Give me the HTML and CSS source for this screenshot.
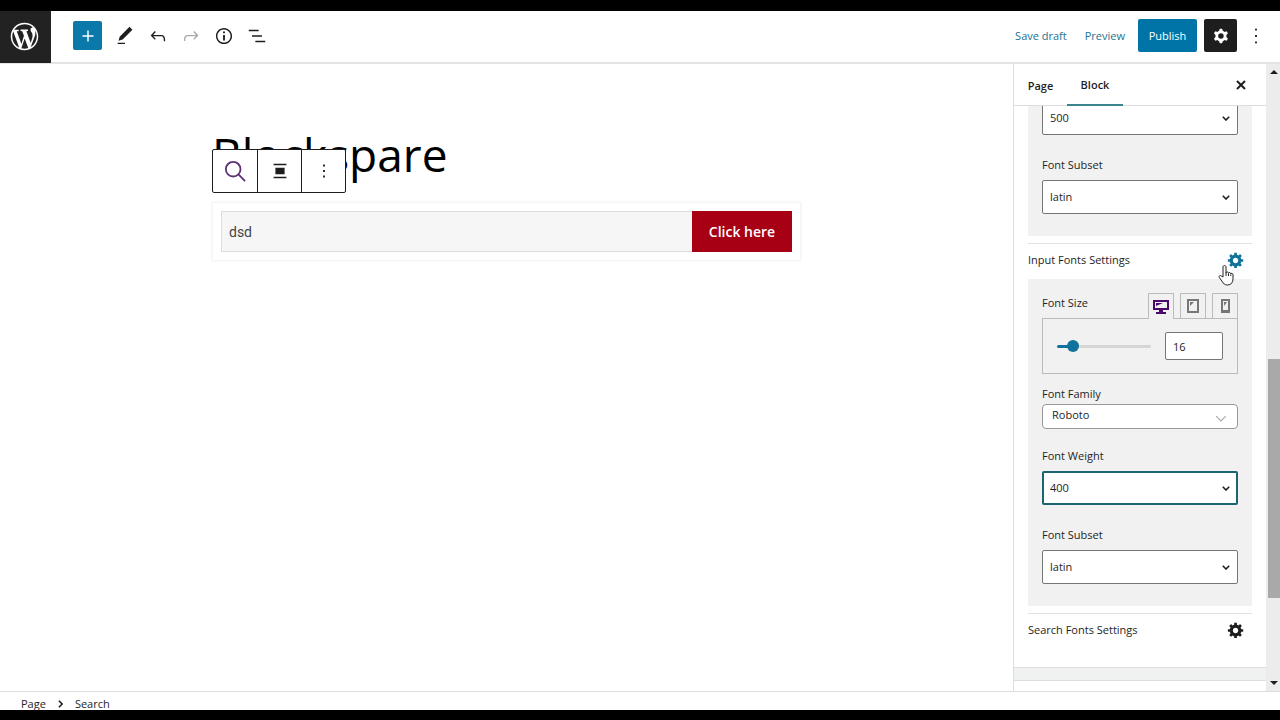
FILE: index.html
```
<!DOCTYPE html>
<html lang="en">
<head>
    <meta charset="UTF-8">
    <meta name="viewport" content="width=device-width, initial-scale=1.0">
    <title>Edit Page</title>
    <link rel="stylesheet" href="styles.css">
</head>
<body>

<header class="topbar">
    <a href="#" class="wp-logo" aria-label="View Pages">
        <svg viewBox="-2 -2 24 24"><path d="M20 10c0-5.51-4.49-10-10-10C4.48 0 0 4.49 0 10c0 5.52 4.48 10 10 10 5.51 0 10-4.48 10-10zM7.78 15.37L4.37 6.22c.55-.02 1.17-.08 1.17-.08.5-.06.44-1.13-.06-1.11 0 0-1.45.11-2.37.11-.18 0-.37 0-.58-.01C4.12 2.69 6.87 1.11 10 1.11c2.33 0 4.45.87 6.05 2.34-.68-.11-1.65.39-1.65 1.58 0 .74.45 1.36.9 2.1.35.61.55 1.36.55 2.46 0 1.49-1.4 5-1.4 5l-3.03-8.37c.54-.02.82-.17.82-.17.5-.05.44-1.25-.06-1.22 0 0-1.44.12-2.38.12-.87 0-2.33-.12-2.33-.12-.5-.03-.56 1.2-.06 1.22l.92.08 1.26 3.41zM17.41 10c.24-.64.74-1.87.43-4.25.7 1.29 1.05 2.71 1.05 4.25 0 3.29-1.73 6.24-4.4 7.78.97-2.59 1.94-5.2 2.92-7.78zM6.1 18.09C3.12 16.65 1.11 13.53 1.11 10c0-1.3.23-2.48.72-3.59C3.25 10.3 4.67 14.2 6.1 18.09zm4.03-6.63l2.58 6.98c-.86.29-1.76.45-2.71.45-.79 0-1.57-.11-2.29-.33.81-2.38 1.62-4.74 2.42-7.1z"/></svg>
    </a>
    <div class="tools">
        <button class="add-btn" aria-label="Add block"><svg viewBox="0 0 24 24"><path d="M18 11.2h-5.2V6h-1.6v5.2H6v1.6h5.2V18h1.6v-5.2H18z"/></svg></button>
        <button class="tool-btn" aria-label="Tools"><svg viewBox="0 0 24 24"><path d="M20.1 5.1L16.9 2 6.2 12.7l-1.3 4.4 4.5-1.3L20.1 5.1zM4 20.8h8v-1.5H4v1.5z"/></svg></button>
        <button class="tool-btn" aria-label="Undo"><svg viewBox="0 0 24 24"><path d="M18.3 11.7c-.6-.6-1.4-.9-2.3-.9H6.7l2.9-3.3-1.1-1-4.5 5L8.5 16l1-1-2.7-2.7H16c.5 0 .9.2 1.3.5 1 1 1 3.4 1 4.5v.3h1.5v-.2c0-1.5 0-4.3-1.5-5.7z"/></svg></button>
        <button class="tool-btn" aria-label="Redo" disabled><svg viewBox="0 0 24 24"><path d="M15.6 6.5l-1.1 1 2.9 3.3H8c-.9 0-1.7.3-2.3.9-1.4 1.5-1.4 4.2-1.4 5.6v.2h1.5v-.3c0-1.1 0-3.5 1-4.5.3-.3.7-.5 1.3-.5h9.2L14.5 15l1.1 1.1 4.6-4.6-4.6-5z"/></svg></button>
        <button class="tool-btn" aria-label="Details"><svg viewBox="0 0 24 24"><path d="M12 3.2c-4.8 0-8.8 3.9-8.8 8.8 0 4.8 3.9 8.8 8.8 8.8 4.8 0 8.8-3.9 8.8-8.8 0-4.8-4-8.8-8.8-8.8zm0 16c-4 0-7.2-3.3-7.2-7.2C4.8 8 8 4.8 12 4.8s7.2 3.3 7.2 7.2c0 4-3.2 7.2-7.2 7.2zM11 17h2v-6h-2v6zm0-8h2V7h-2v2z"/></svg></button>
        <button class="tool-btn" aria-label="List view"><svg viewBox="0 0 24 24"><path d="M13.8 5.2H3v1.5h10.8V5.2zm-3.6 12v1.5H21v-1.5H10.2zm7.2-6H6.6v1.5h10.8v-1.5z"/></svg></button>
    </div>
    <div class="actions">
        <button class="link-btn">Save draft</button>
        <button class="link-btn">Preview</button>
        <button class="publish-btn">Publish</button>
        <button class="settings-btn" aria-label="Settings"><svg viewBox="0 0 24 24"><path fill-rule="evenodd" d="M10.289 4.836A1 1 0 0111.275 4h1.306a1 1 0 01.987.836l.244 1.466c.787.26 1.503.679 2.108 1.218l1.393-.522a1 1 0 011.216.437l.653 1.13a1 1 0 01-.23 1.273l-1.148.944a6.025 6.025 0 010 2.435l1.149.946a1 1 0 01.23 1.272l-.653 1.13a1 1 0 01-1.216.437l-1.394-.522c-.605.54-1.32.958-2.108 1.218l-.244 1.466a1 1 0 01-.987.836h-1.306a1 1 0 01-.986-.836l-.244-1.466a5.995 5.995 0 01-2.108-1.218l-1.394.522a1 1 0 01-1.217-.436l-.653-1.131a1 1 0 01.23-1.272l1.149-.946a6.026 6.026 0 010-2.435l-1.148-.944a1 1 0 01-.23-1.272l.653-1.131a1 1 0 011.217-.437l1.393.522a5.994 5.994 0 012.108-1.218l.244-1.466zM14.929 12a3 3 0 11-6 0 3 3 0 016 0z"/></svg></button>
        <button class="more-btn" aria-label="Options"><svg viewBox="0 0 24 24"><path d="M11 4h2v2h-2zM11 11h2v2h-2zM11 18h2v2h-2z"/></svg></button>
    </div>
</header>

<div class="editor">
    <main class="canvas">
        <div class="content">
            <h1>Blockspare</h1>
            <div class="search-block">
                <div class="block-toolbar">
                    <button aria-label="Search block"><svg class="icon-search" viewBox="0 0 24 24"><circle cx="10" cy="10" r="8"/><path d="M16 16l7 7"/></svg></button>
                    <button aria-label="Align"><svg class="icon-align" viewBox="0 0 24 24"><path d="M5 4h14v1.6H5zM7 8.5h10v7H7zM5 18.4h14V20H5z"/></svg></button>
                    <button aria-label="More"><svg class="icon-align" viewBox="0 0 24 24"><path d="M11 5h2v2h-2zM11 11h2v2h-2zM11 17h2v2h-2z"/></svg></button>
                </div>
                <form class="search-form">
                    <input type="text" value="dsd" aria-label="Search">
                    <button type="button">Click here</button>
                </form>
            </div>
        </div>
    </main>

    <aside class="sidebar">
        <div class="tabs">
            <button class="tab">Page</button>
            <button class="tab active">Block</button>
            <button class="close-btn" aria-label="Close settings"><svg viewBox="0 0 12 12"><path d="M2 2l8 8M10 2l-8 8"/></svg></button>
        </div>

        <div class="settings">
            <section class="panel">
                <div class="group group-cut">
                    <div class="select">
                        <select aria-label="Font Weight"><option>500</option></select>
                        <svg viewBox="0 0 10 6"><path d="M1 1l4 4 4-4"/></svg>
                    </div>
                    <label for="subset1">Font Subset</label>
                    <div class="select">
                        <select id="subset1"><option>latin</option></select>
                        <svg viewBox="0 0 10 6"><path d="M1 1l4 4 4-4"/></svg>
                    </div>
                </div>

                <div class="setting-row">
                    <span>Input Fonts Settings</span>
                    <button class="gear open" aria-label="Input Fonts Settings"><svg viewBox="0 0 20 20"><path d="M18 12h-2.18c-.17.7-.44 1.35-.81 1.93l1.54 1.54-2.1 2.1-1.54-1.54c-.58.36-1.23.63-1.91.79V19H8v-2.18c-.68-.16-1.33-.43-1.91-.79l-1.54 1.54-2.12-2.12 1.54-1.54c-.36-.58-.63-1.23-.79-1.91H1V9.03h2.17c.16-.7.44-1.35.8-1.94L2.43 5.55l2.1-2.1 1.54 1.54c.58-.37 1.24-.64 1.93-.81V2h3v2.18c.68.16 1.33.43 1.91.79l1.54-1.54 2.12 2.12-1.54 1.54c.36.59.64 1.24.8 1.94H18V12zm-8.5 1.5c1.66 0 3-1.34 3-3s-1.34-3-3-3-3 1.34-3 3 1.34 3 3 3z"/></svg></button>
                    <svg class="pointer" viewBox="0 0 16 22"><path d="M5 13V3c0-2 3-2 3 0v6c0-1.500 2.500-1.500 2.500.5 0-1.500 2.300-1.300 2.300.6 0-1.300 2.200-1.100 2.200.8V15c0 3.500-2 6-5.500 6-3 0-4-1.500-5.200-3.400L1.300 13.500c-.9-1.600 1-2.500 2-1.500z"/><path d="M8 9v3M10.500 10v2M12.800 10.500V12"/></svg>
                </div>

                <div class="group group-open">
                    <div class="size-head">
                        <label for="size">Font Size</label>
                        <div class="devices">
                            <button class="active" aria-label="Desktop"><svg viewBox="0 0 16 16"><path fill-rule="evenodd" d="M0 1h16v10h-6v2h3v2H3v-2h3v-2H0zM2 3v6h12V3z"/><path d="M3 4h7L3 7z"/></svg></button>
                            <button aria-label="Tablet"><svg viewBox="0 0 16 16"><path fill-rule="evenodd" d="M2 1h12v14H2zM4 3v10h8V3z"/><path d="M5 4h4L5 8z"/></svg></button>
                            <button aria-label="Mobile"><svg viewBox="0 0 16 16"><path fill-rule="evenodd" d="M4 1h9v14H4zM6 3v9h5V3z"/><path d="M7 4h3L7 8z"/></svg></button>
                        </div>
                    </div>
                    <div class="size-box">
                        <input type="range" min="0" max="130" value="16" aria-label="Font size slider">
                        <input type="text" id="size" value="16">
                    </div>

                    <label for="family">Font Family</label>
                    <div class="select family">
                        <select id="family"><option>Roboto</option></select>
                        <svg viewBox="0 0 10 6"><path d="M1 1l4 4 4-4"/></svg>
                    </div>

                    <label for="weight">Font Weight</label>
                    <div class="select focused">
                        <select id="weight"><option>400</option></select>
                        <svg viewBox="0 0 10 6"><path d="M1 1l4 4 4-4"/></svg>
                    </div>

                    <label for="subset2">Font Subset</label>
                    <div class="select">
                        <select id="subset2"><option>latin</option></select>
                        <svg viewBox="0 0 10 6"><path d="M1 1l4 4 4-4"/></svg>
                    </div>
                </div>

                <div class="setting-row">
                    <span>Search Fonts Settings</span>
                    <button class="gear" aria-label="Search Fonts Settings"><svg viewBox="0 0 20 20"><path d="M18 12h-2.18c-.17.7-.44 1.35-.81 1.93l1.54 1.54-2.1 2.1-1.54-1.54c-.58.36-1.23.63-1.91.79V19H8v-2.18c-.68-.16-1.33-.43-1.91-.79l-1.54 1.54-2.12-2.12 1.54-1.54c-.36-.58-.63-1.23-.79-1.91H1V9.03h2.17c.16-.7.44-1.35.8-1.94L2.43 5.55l2.1-2.1 1.54 1.54c.58-.37 1.24-.64 1.93-.81V2h3v2.18c.68.16 1.33.43 1.91.79l1.54-1.54 2.12 2.12-1.54 1.54c.36.59.64 1.24.8 1.94H18V12zm-8.5 1.5c1.66 0 3-1.34 3-3s-1.34-3-3-3-3 1.34-3 3 1.34 3 3 3z"/></svg></button>
                </div>
            </section>
            <div class="panel-gap"></div>
        </div>
    </aside>

    <div class="scrollbar">
        <svg viewBox="0 0 8 4"><path d="M0 4l4-4 4 4z"/></svg>
        <div class="track"><div class="thumb"></div></div>
        <svg viewBox="0 0 8 4"><path d="M0 0l4 4 4-4z"/></svg>
    </div>
</div>

<footer class="breadcrumb">
    <a href="#">Page</a>
    <svg viewBox="0 0 6 10"><path d="M1 1l4 4-4 4"/></svg>
    <a href="#">Search</a>
</footer>

</body>
</html>
```
FILE: styles.css
```
* {
    box-sizing: border-box;
}

body {
    margin: 0;
    height: 100vh;
    display: flex;
    flex-direction: column;
    border-top: 11px solid #000;
    border-bottom: 10px solid #000;
    background: #fff;
    color: #1e1e1e;
    font-family: "Open Sans", "Noto Sans", sans-serif;
    font-size: 11px;
    line-height: 20px;
    overflow: hidden;
}

button,
input,
select {
    font: inherit;
    color: inherit;
    margin: 0;
}

button {
    display: flex;
    align-items: center;
    justify-content: center;
    padding: 0;
    border: none;
    background: none;
    cursor: pointer;
}

svg {
    display: block;
    fill: currentColor;
}

a {
    color: inherit;
    text-decoration: none;
}

/* Top bar */
.topbar {
    display: flex;
    align-items: center;
    height: 53px;
    flex-shrink: 0;
    padding-bottom: 2px;
    border-bottom: 2px solid #e4e4e4;
}

.wp-logo {
    width: 51px;
    height: 52px;
    margin-bottom: -3px;
    padding: 0 2px 2px 0;
    display: flex;
    align-items: center;
    justify-content: center;
    background: #222;
    color: #fff;
}

.wp-logo svg {
    width: 33px;
    height: 33px;
}

.tools {
    display: flex;
    align-items: center;
    margin-left: 22px;
}

.tools svg {
    width: 22px;
    height: 22px;
}

.add-btn {
    width: 29px;
    height: 29px;
    margin-right: 6px;
    border-radius: 2px;
    background: #0a78a8;
    color: #fff;
}

.tool-btn {
    width: 33px;
    height: 32px;
}

.tool-btn:disabled {
    color: #aaa;
}

.actions {
    display: flex;
    align-items: center;
    margin-left: auto;
    margin-right: 13px;
}

.link-btn {
    margin-right: 18px;
    color: #1f7391;
}

.publish-btn {
    width: 59px;
    height: 33px;
    margin-left: -5px;
    border-radius: 2px;
    background: #0074a6;
    color: #fff;
}

.settings-btn {
    width: 33px;
    height: 33px;
    margin: 0 8px 0 7px;
    border-radius: 2px;
    background: #1e1e1e;
    color: #fff;
}

.settings-btn svg,
.more-btn svg {
    width: 22px;
    height: 22px;
}

/* Editor */
.editor {
    display: flex;
    flex: 1;
    min-height: 0;
}

.canvas {
    flex: 1;
    min-width: 0;
    padding-top: 58px;
}

.content {
    max-width: 589px;
    margin: 0 auto;
}

h1 {
    margin: 0 0 16px;
    font-size: 46px;
    line-height: 64px;
    font-weight: 400;
    color: #000;
}

.search-block {
    position: relative;
    padding: 8px;
    border: 1px solid #f4f4f4;
    box-shadow: 0 0 3px #f4f4f4;
}

.block-toolbar {
    position: absolute;
    left: -1px;
    bottom: 100%;
    margin-bottom: 10px;
    display: flex;
    height: 44px;
    border: 1px solid #1e1e1e;
    border-radius: 2px;
    background: #fff;
}

.block-toolbar button {
    width: 44px;
}

.block-toolbar button + button {
    border-left: 1px solid #1e1e1e;
}

.icon-search {
    width: 22px;
    height: 22px;
    fill: none;
    stroke: #5b3277;
    stroke-width: 2;
}

.icon-align {
    width: 22px;
    height: 22px;
}

.search-form {
    display: flex;
    height: 41px;
}

.search-form input {
    flex: 1;
    min-width: 0;
    padding: 0 7px;
    border: 1px solid #ddd;
    border-right: none;
    background: #f6f6f6;
    color: #444;
    font-family: Roboto, sans-serif;
    font-size: 14px;
}

.search-form button {
    width: 100px;
    background: #a70014;
    color: #fff;
    font-size: 14px;
    font-weight: 600;
}

/* Sidebar */
.sidebar {
    display: flex;
    flex-direction: column;
    width: 253px;
    border-left: 1px solid #ddd;
}

.tabs {
    display: flex;
    height: 42px;
    flex-shrink: 0;
    border-bottom: 1px solid #ddd;
}

.tab {
    width: 56px;
    margin-bottom: -1px;
    padding-top: 2px;
    font-weight: 600;
}

.tab.active {
    border-bottom: 2px solid #3b868d;
}

.tab:first-child {
    width: 53px;
}

.close-btn {
    margin-left: auto;
    width: 50px;
}

.close-btn svg {
    width: 12px;
    height: 12px;
    fill: none;
    stroke: #1e1e1e;
    stroke-width: 2;
}

.settings {
    flex: 1;
    min-height: 0;
    overflow: hidden;
}

.panel {
    padding: 0 14px 18px;
    border-bottom: 1px solid #ddd;
}

.panel-gap {
    height: 13px;
    border-bottom: 1px solid #ddd;
    background: #f0f2f2;
}

.group {
    display: flex;
    flex-direction: column;
    padding: 0 14px 22px;
    background: #f1f1f1;
}

.group label {
    height: 20px;
}

/* scrolled part way under the tabs */
.group-cut {
    margin-top: -5px;
}

.group-open {
    padding-top: 14px;
}

.select {
    position: relative;
    height: 34px;
    margin: 5px 0 20px;
}

.group-cut .select:first-child {
    margin-top: 0;
}

.group .select:last-child {
    margin-bottom: 0;
}

.select select {
    width: 100%;
    height: 100%;
    padding: 0 7px;
    border: 1px solid #757575;
    border-radius: 2px;
    background: #fff;
    appearance: none;
}

.select svg {
    position: absolute;
    right: 8px;
    top: 50%;
    width: 8px;
    margin-top: -2px;
    fill: none;
    stroke: #1e1e1e;
    stroke-width: 2;
    pointer-events: none;
}

.select.focused select {
    border: 2px solid #1c6470;
    padding: 0 6px;
}

.select.family {
    height: 25px;
    margin: 0 0 17px;
}

.family select {
    padding: 0 9px 4px;
    border-color: #999;
    border-radius: 4px;
}

.family svg {
    right: 11px;
    width: 12px;
    stroke: #aaa;
    stroke-width: 1;
}

.setting-row {
    position: relative;
    display: flex;
    align-items: center;
    justify-content: space-between;
    height: 36px;
    margin-top: 7px;
    padding: 0 7px 3px 0;
    border-top: 1px solid #e2e2e2;
}

.gear svg {
    width: 18px;
    height: 18px;
}

.gear.open {
    color: #0f739b;
}

.pointer {
    position: absolute;
    right: 18px;
    top: 20px;
    width: 16px;
    height: 22px;
    fill: #fff;
    stroke: #222;
    z-index: 1;
}

.size-head {
    display: flex;
    justify-content: space-between;
    height: 25px;
}

.devices {
    display: flex;
    gap: 6px;
}

.devices button {
    width: 26px;
    height: 25px;
    border: 1px solid #bbb;
    border-bottom: none;
    color: #777;
}

.devices .active {
    height: 26px;
    background: #f1f1f1;
    color: #4b0a6b;
    z-index: 1;
}

.devices svg {
    width: 16px;
    height: 16px;
}

.size-box {
    display: flex;
    align-items: center;
    justify-content: space-between;
    height: 56px;
    margin-bottom: 10px;
    padding: 0 14px;
    border: 1px solid #bbb;
}

.size-box input[type="range"] {
    width: 94px;
    height: 12px;
    appearance: none;
    background: none;
}

.size-box input[type="range"]::-webkit-slider-runnable-track {
    height: 3px;
    border-radius: 2px;
    background: linear-gradient(to right, #0f739b 17%, #d5d5d5 17%);
}

.size-box input[type="range"]::-webkit-slider-thumb {
    appearance: none;
    width: 12px;
    height: 12px;
    margin-top: -5px;
    border-radius: 50%;
    background: #0f739b;
}

.size-box input[type="text"] {
    width: 58px;
    height: 28px;
    padding: 0 7px;
    border: 1px solid #757575;
    border-radius: 2px;
    background: #fff;
}

/* Scrollbar */
.scrollbar {
    display: flex;
    flex-direction: column;
    width: 14px;
    padding: 6px 0 6px 2px;
    background: #ececec;
}

.scrollbar svg {
    width: 8px;
    height: 4px;
    margin: 0 auto;
}

.track {
    flex: 1;
    display: grid;
    grid-template-rows: 279fr 239fr 77fr;
    margin: 6px 0;
}

.thumb {
    grid-row: 2;
    background: #a9a9a9;
}

/* Footer */
.breadcrumb {
    display: flex;
    align-items: center;
    flex-shrink: 0;
    gap: 12px;
    height: 19px;
    padding: 5px 21px 0;
    border-top: 1px solid #ddd;
}

.breadcrumb svg {
    width: 5px;
    height: 8px;
    fill: none;
    stroke: #1e1e1e;
    stroke-width: 2;
}
```
